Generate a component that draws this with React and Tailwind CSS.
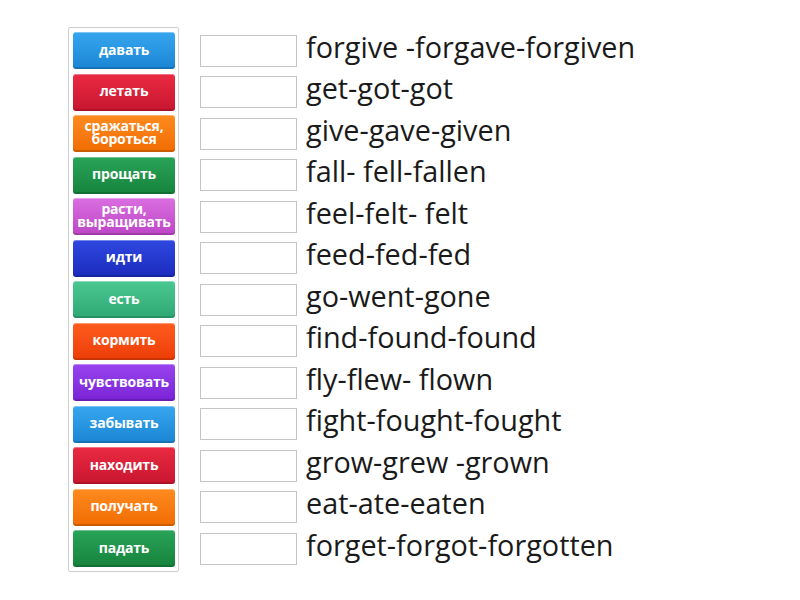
const cards = [
  { label: 'давать', cls: 'from-[#36a6ee] to-[#1a86d4]' },
  { label: 'летать', cls: 'from-[#ea2a42] to-[#c8152f]' },
  { label: 'сражаться, бороться', cls: 'from-[#ff8b1e] to-[#f06c00]' },
  { label: 'прощать', cls: 'from-[#29a459] to-[#16833b]' },
  { label: 'расти, выращивать', cls: 'from-[#da6ee0] to-[#bd45c6]' },
  { label: 'идти', cls: 'from-[#2f47e0] to-[#1c2bbd]' },
  { label: 'есть', cls: 'from-[#4ac891] to-[#2fa874]' },
  { label: 'кормить', cls: 'from-[#ff5c1e] to-[#ec3c05]' },
  { label: 'чувствовать', cls: 'from-[#9843ee] to-[#7a22d6]' },
  { label: 'забывать', cls: 'from-[#36a6ee] to-[#1a86d4]' },
  { label: 'находить', cls: 'from-[#ea2a42] to-[#c8152f]' },
  { label: 'получать', cls: 'from-[#ff8b1e] to-[#f06c00]' },
  { label: 'падать', cls: 'from-[#29a459] to-[#16833b]' },
];

const verbs = [
  'forgive -forgave-forgiven',
  'get-got-got',
  'give-gave-given',
  'fall- fell-fallen',
  'feel-felt- felt',
  'feed-fed-fed',
  'go-went-gone',
  'find-found-found',
  'fly-flew- flown',
  'fight-fought-fought',
  'grow-grew -grown',
  'eat-ate-eaten',
  'forget-forgot-forgotten',
];

export default function App() {
  return (
    <div
      className="w-[800px] h-[600px] bg-white flex items-start pt-[27px] pl-[68px]"
      style={{ fontFamily: '"Open Sans", sans-serif' }}
    >
      {/* Cards column */}
      <div className="w-[111px] border border-[#cfcfcf] rounded-[2px] p-[4px] flex flex-col gap-[4.5px]">
        {cards.map((c) => (
          <div
            key={c.label}
            className={`h-[37px] w-[102px] rounded-[3px] bg-gradient-to-b ${c.cls} shadow-[inset_0_1px_0_rgba(255,255,255,0.35),inset_0_-2px_0_rgba(0,0,0,0.15)] flex items-center justify-center text-center text-white font-bold text-[14px] leading-[13px] tracking-[-0.2px] pb-[3px]`}
          >
            {c.label}
          </div>
        ))}
      </div>

      {/* Answers column */}
      <div className="ml-[21px] pt-[5px] flex flex-col gap-[4.5px]">
        {verbs.map((v) => (
          <div key={v} className="h-[37px] flex items-center">
            <div className="w-[97px] h-[32px] border border-[#c4c4c4] bg-white" />
            <span className="ml-[9px] text-[28.8px] text-[#1a1a1a] leading-none -mt-[7px]">{v}</span>
          </div>
        ))}
      </div>
    </div>
  );
}
